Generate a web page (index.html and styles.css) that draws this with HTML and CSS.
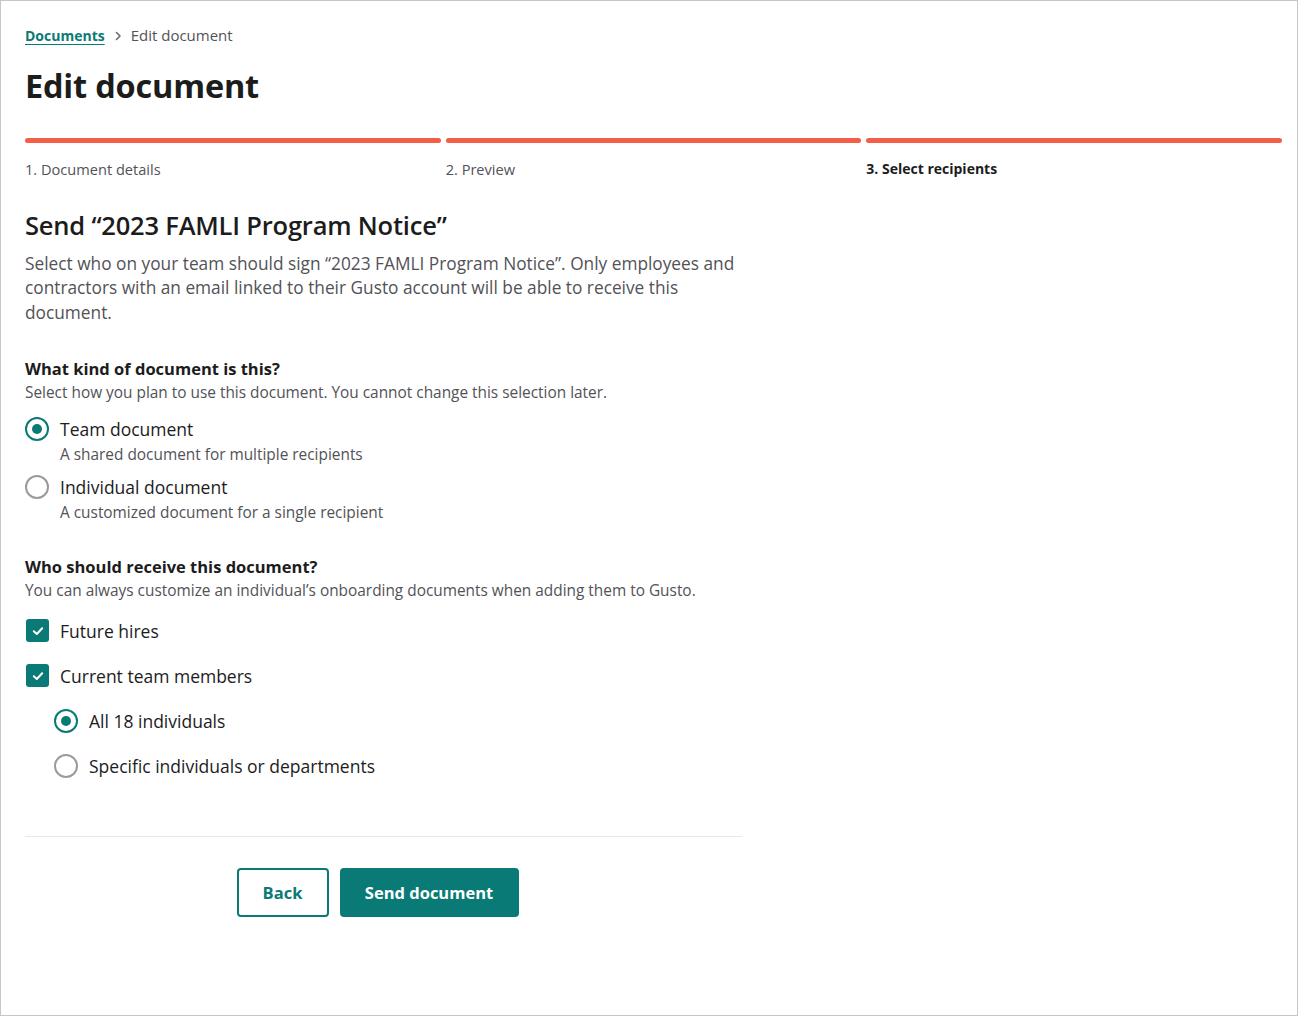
FILE: index.html
```html
<!DOCTYPE html>
<html lang="en">
<head>
<meta charset="utf-8">
<title>Edit document</title>
<link rel="stylesheet" href="styles.css">
</head>
<body>
<div class="frame">
  <nav class="breadcrumb">
    <a href="#" class="crumb-link">Documents</a>
    <svg class="crumb-sep" width="8" height="10" viewBox="0 0 8 10"><path d="M2.5 1.5 L6 5 L2.5 8.5" fill="none" stroke="#6b6b6b" stroke-width="1.6" stroke-linecap="round" stroke-linejoin="round"/></svg>
    <span class="crumb-current">Edit document</span>
  </nav>
  <h1 class="page-title">Edit document</h1>

  <div class="steps">
    <div class="step"><div class="step-bar"></div><div class="step-label">1. Document details</div></div>
    <div class="step"><div class="step-bar"></div><div class="step-label">2. Preview</div></div>
    <div class="step"><div class="step-bar"></div><div class="step-label step-current">3. Select recipients</div></div>
  </div>

  <section class="content">
    <h2 class="section-title">Send “2023 FAMLI Program Notice”</h2>
    <p class="intro">Select who on your team should sign “2023 FAMLI Program Notice”. Only employees and contractors with an email linked to their Gusto account will be able to receive this document.</p>

    <fieldset class="group group-kind">
      <legend class="group-title">What kind of document is this?</legend>
      <p class="group-hint">Select how you plan to use this document. You cannot change this selection later.</p>
      <div class="option">
        <span class="radio radio-on"></span>
        <div class="option-text">
          <div class="option-label">Team document</div>
          <div class="option-desc">A shared document for multiple recipients</div>
        </div>
      </div>
      <div class="option">
        <span class="radio"></span>
        <div class="option-text">
          <div class="option-label">Individual document</div>
          <div class="option-desc">A customized document for a single recipient</div>
        </div>
      </div>
    </fieldset>

    <fieldset class="group group-who">
      <legend class="group-title">Who should receive this document?</legend>
      <p class="group-hint">You can always customize an individual’s onboarding documents when adding them to Gusto.</p>
      <div class="check-row">
        <span class="checkbox"><svg width="16" height="16" viewBox="0 0 16 16"><path d="M3.8 8.2 L6.8 11 L12.2 5.2" fill="none" stroke="#fff" stroke-width="2" stroke-linecap="round" stroke-linejoin="round"/></svg></span>
        <span class="option-label">Future hires</span>
      </div>
      <div class="check-row">
        <span class="checkbox"><svg width="16" height="16" viewBox="0 0 16 16"><path d="M3.8 8.2 L6.8 11 L12.2 5.2" fill="none" stroke="#fff" stroke-width="2" stroke-linecap="round" stroke-linejoin="round"/></svg></span>
        <span class="option-label">Current team members</span>
      </div>
      <div class="sub-options">
        <div class="check-row">
          <span class="radio radio-on"></span>
          <span class="option-label">All 18 individuals</span>
        </div>
        <div class="check-row">
          <span class="radio"></span>
          <span class="option-label">Specific individuals or departments</span>
        </div>
      </div>
    </fieldset>

    <div class="divider"></div>
    <div class="actions">
      <button class="btn btn-secondary" type="button">Back</button>
      <button class="btn btn-primary" type="button">Send document</button>
    </div>
  </section>
</div>
</body>
</html>
```

FILE: styles.css
```css
* { box-sizing: border-box; }
html, body { margin: 0; padding: 0; background: #fff; }
body {
  font-family: "Open Sans", "Noto Sans", sans-serif;
  color: #1c1c1c;
}
.frame {
  width: 1298px;
  height: 1016px;
  border: 1px solid #c6c6c6;
  padding: 23px 15px 0 24px;
}
.breadcrumb {
  display: flex;
  align-items: center;
  gap: 9px;
  font-size: 14px;
  height: 22px;
}
.crumb-link {
  color: #0a7a76;
  font-weight: 700;
  text-decoration: underline;
  text-underline-offset: 3px;
}
.crumb-sep { margin-top: 1px; }
.crumb-current { color: #525257; font-size: 15px; }
.page-title {
  margin: 20px 0 0;
  font-size: 32.5px;
  font-weight: 700;
  line-height: 40px;
  letter-spacing: -0.2px;
}
.steps {
  margin-top: 32px;
  display: grid;
  grid-template-columns: 1fr 1fr 1fr;
  gap: 5px;
}
.step-bar {
  height: 5px;
  border-radius: 3px;
  background: #f45d48;
}
.step-label {
  margin-top: 16px;
  font-size: 14.6px;
  color: #525257;
  line-height: 20px;
}
.step-current { color: #1c1c1c; font-weight: 700; font-size: 14px; }
.content { width: 717px; }
.section-title {
  margin: 30px 0 0;
  font-size: 25.5px;
  font-weight: 600;
  line-height: 32px;
  letter-spacing: -0.2px;
}
.intro {
  margin: 11px 0 0;
  font-size: 17.3px;
  line-height: 24.3px;
  color: #525257;
  width: 740px;
}
.group {
  border: 0;
  margin: 0;
  padding: 0;
  min-width: 0;
}
.group-kind { margin-top: 33px; }
.group-who { margin-top: 32px; }
.group-title {
  padding: 0;
  font-size: 16.5px;
  font-weight: 700;
  line-height: 22px;
}
.group-hint {
  margin: 2px 0 0;
  font-size: 15.4px;
  line-height: 22px;
  color: #525257;
}
.option {
  display: flex;
  gap: 11px;
  margin-top: 13px;
}
.option + .option { margin-top: 9px; }
.option-label {
  font-size: 17.5px;
  line-height: 24px;
  color: #1c1c1c;
}
.option-desc {
  margin-top: 3px;
  font-size: 15.4px;
  line-height: 22px;
  color: #525257;
}
.radio {
  flex: none;
  width: 24px;
  height: 24px;
  border-radius: 50%;
  border: 2px solid #9a9a9a;
  background: #fff;
  display: inline-flex;
  align-items: center;
  justify-content: center;
}
.radio-on { border-color: #0a7a76; }
.radio-on::after {
  content: "";
  width: 10px;
  height: 10px;
  border-radius: 50%;
  background: #0a7a76;
}
.check-row {
  display: flex;
  align-items: center;
  gap: 11px;
  margin-top: 17px;
  height: 24px;
}
.check-row + .check-row { margin-top: 21px; }
.checkbox {
  flex: none;
  width: 23px;
  height: 23px;
  margin-left: 1px;
  border-radius: 3px;
  background: #0a7a76;
  display: inline-flex;
  align-items: center;
  justify-content: center;
}
.sub-options { padding-left: 29px; }
.sub-options .check-row { margin-top: 21px; }
.divider {
  margin-top: 58px;
  height: 1px;
  background: #e8e8e8;
}
.actions {
  margin-top: 31px;
  display: flex;
  justify-content: center;
  gap: 11px;
  padding-right: 12px;
}
.btn {
  height: 49px;
  border-radius: 4px;
  font-family: inherit;
  font-size: 16.5px;
  font-weight: 700;
  cursor: pointer;
}
.btn-secondary {
  width: 92px;
  border: 2px solid #0a7a76;
  background: #fff;
  color: #0a7a76;
}
.btn-primary {
  width: 179px;
  border: 2px solid #0a7a76;
  background: #0a7a76;
  color: #fff;
}
```
